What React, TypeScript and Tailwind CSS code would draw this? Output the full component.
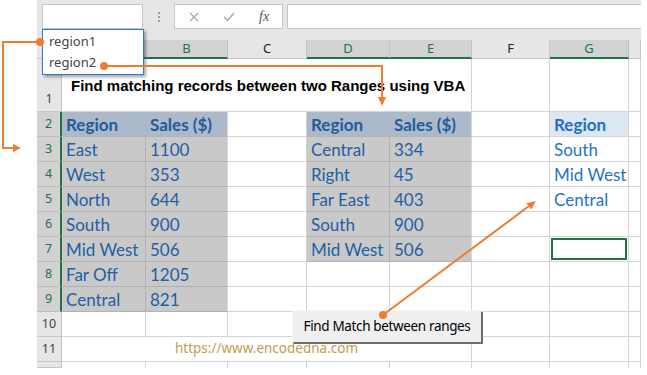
import React from 'react';

const colW = [84, 82, 79, 83, 82, 78, 79, 12];
const colL = ['A', 'B', 'C', 'D', 'E', 'F', 'G', ''];
const colSel = [true, true, false, true, true, false, true, false];

type Kind = 'n' | 'th' | 'thL' | 'td' | 'tdL' | 'gh' | 'gd' | 'sel' | 'title' | 'url' | 'last';
type Cell = { t?: string; k: Kind; span?: number };

const KIND: Record<Kind, string> = {
  n: 'border-r border-b border-[#d4d4d4]',
  last: 'border-r border-[#d4d4d4]',
  th: 'bg-[#acb9ca] border-r border-b border-r-[#acb9ca] border-b-[#b4b4b4] font-bold text-[#1f5c9a] pl-[4px]',
  thL: 'bg-[#acb9ca] border-r border-b border-r-[#dadada] border-b-[#b4b4b4] font-bold text-[#1f5c9a] pl-[4px]',
  td: 'bg-[#c9c9c9] border-r border-b border-[#b1b1b1] text-[#1f5fa3] pl-[4px]',
  tdL: 'bg-[#c9c9c9] border-r border-b border-r-[#dadada] border-b-[#b1b1b1] text-[#1f5fa3] pl-[4px]',
  gh: 'bg-[#dde7f1] border-r border-b border-[#d4d4d4] font-bold text-[#1f6fbf] pl-[4px]',
  gd: 'border-r border-b border-[#d4d4d4] text-[#2475c9] pl-[4px]',
  sel: 'border-r border-b border-[#d4d4d4] p-[1px]',
  title: 'border-r border-b border-r-[#d4d4d4] border-b-[#d4d4d4] pl-[9px]',
  url: 'border-r border-b border-[#d4d4d4] justify-center',
};

const t1 = [
  ['Region', 'Sales ($)'],
  ['East', '1100'],
  ['West', '353'],
  ['North', '644'],
  ['South', '900'],
  ['Mid West', '506'],
  ['Far Off', '1205'],
  ['Central', '821'],
];
const t2 = [
  ['Region', 'Sales ($)'],
  ['Central', '334'],
  ['Right', '45'],
  ['Far East', '403'],
  ['South', '900'],
  ['Mid West', '506'],
];
const gcol = ['Region', 'South', 'Mid West', 'Central'];

const rowH = [53, 25, 25, 25, 25, 25, 25, 25, 25, 25, 25, 6];

function buildRow(r: number): Cell[] {
  if (r === 1) {
    return [{ k: 'title', span: 5, t: 'Find matching records between two Ranges using VBA' }, { k: 'n' }, { k: 'n' }, { k: 'n' }];
  }
  if (r === 11) {
    return [{ k: 'url', span: 5, t: 'https://www.encodedna.com' }, { k: 'n' }, { k: 'n' }, { k: 'n' }];
  }
  if (r === 12) {
    return colW.map(() => ({ k: 'last' as Kind }));
  }
  const cells: Cell[] = [];
  const i1 = r - 2;
  if (i1 >= 0 && i1 < t1.length) {
    cells.push({ k: i1 === 0 ? 'th' : 'td', t: t1[i1][0] });
    cells.push({ k: i1 === 0 ? 'thL' : 'tdL', t: t1[i1][1] });
  } else {
    cells.push({ k: 'n' }, { k: 'n' });
  }
  cells.push({ k: 'n' });
  if (i1 >= 0 && i1 < t2.length) {
    cells.push({ k: i1 === 0 ? 'th' : 'td', t: t2[i1][0] });
    cells.push({ k: i1 === 0 ? 'thL' : 'tdL', t: t2[i1][1] });
  } else {
    cells.push({ k: 'n' }, { k: 'n' });
  }
  cells.push({ k: 'n' });
  if (i1 >= 0 && i1 < gcol.length) {
    cells.push({ k: i1 === 0 ? 'gh' : 'gd', t: gcol[i1] });
  } else if (r === 7) {
    cells.push({ k: 'sel' });
  } else {
    cells.push({ k: 'n' });
  }
  cells.push({ k: 'n' });
  return cells;
}

function SheetRow({ r }: { r: number }) {
  const cells = buildRow(r);
  const selected = r >= 2 && r <= 9;
  let ci = 0;
  return (
    <div className="flex" style={{ height: rowH[r - 1] }}>
      <div
        className={
          selected
            ? 'w-[25px] shrink-0 flex justify-center items-center bg-[#d2d2d2] border-b border-b-[#bdbdbd] border-r-2 border-r-[#217346] text-[#217346] text-[12.5px] font-["Noto_Sans",sans-serif]'
            : r === 1
            ? 'w-[25px] shrink-0 flex justify-center items-end pb-[2px] bg-[#e6e6e6] border-b border-r border-[#c6c6c6] text-[#444] text-[12.5px] font-["Noto_Sans",sans-serif]'
            : 'w-[25px] shrink-0 flex justify-center items-center bg-[#e6e6e6] border-b border-r border-[#c6c6c6] text-[#444] text-[12.5px] font-["Noto_Sans",sans-serif]'
        }
      >
        {r <= 11 ? r : ''}
      </div>
      {cells.map((c, idx) => {
        const span = c.span ?? 1;
        let w = 0;
        for (let s = 0; s < span; s++) w += colW[ci + s];
        ci += span;
        let content: React.ReactNode = null;
        if (c.k === 'title') {
          content = (
            <span className="font-['Liberation_Sans',sans-serif] font-bold text-[15px] text-black whitespace-nowrap">{c.t}</span>
          );
        } else if (c.k === 'url') {
          content = (
            <span className="font-['Noto_Sans',sans-serif] text-[13.5px] text-[#c59b50] whitespace-nowrap">{c.t}</span>
          );
        } else if (c.k === 'sel') {
          content = <div className="w-full h-full border-2 border-[#217346]"></div>;
        } else if (c.t) {
          content = <span className="whitespace-nowrap">{c.t}</span>;
        }
        return (
          <div
            key={idx}
            className={`shrink-0 flex items-center overflow-visible font-['Lato',sans-serif] text-[17px] leading-none ${KIND[c.k]}`}
            style={{ width: w }}
          >
            {content}
          </div>
        );
      })}
    </div>
  );
}

export default function App() {
  return (
    <div className="relative w-[647px] h-[375px] bg-white overflow-hidden">
      <div className="flex">
        <div className="w-[37px] shrink-0"></div>
        <div className="w-[604px] shrink-0 flex flex-col">
          {/* formula bar */}
          <div className="h-[40px] bg-[#e6e6e6] flex items-start pt-[4px] pl-[5px]">
            <div className="w-[101px] h-[25px] bg-white border border-[#c6c6c6]"></div>
            <div className="w-[31px] h-[25px] flex flex-col items-center justify-center gap-[2px]">
              <div className="w-[2px] h-[2px] bg-[#9a9a9a]"></div>
              <div className="w-[2px] h-[2px] bg-[#9a9a9a]"></div>
              <div className="w-[2px] h-[2px] bg-[#9a9a9a]"></div>
            </div>
            <div className="w-[109px] h-[25px] bg-white border border-[#c6c6c6] flex items-center">
              <div className="w-[36px] flex justify-center pl-[2px]">
                <svg width="10" height="10" viewBox="0 0 10 10">
                  <path d="M1 1 L9 9 M9 1 L1 9" stroke="#a6a6a6" strokeWidth="1.3" />
                </svg>
              </div>
              <div className="w-[36px] flex justify-center">
                <svg width="12" height="10" viewBox="0 0 12 10">
                  <path d="M1 5 L4.5 8.5 L11 1" stroke="#a6a6a6" strokeWidth="1.4" fill="none" />
                </svg>
              </div>
              <div className="w-[36px] flex justify-center">
                <span className="font-['Liberation_Serif',serif] italic text-[14px] text-[#555] leading-none">fx</span>
              </div>
            </div>
            <div className="ml-[4px] flex-1 h-[25px] bg-white border border-r-0 border-[#c6c6c6]"></div>
          </div>
          {/* column headers */}
          <div className="flex h-[19px]">
            <div className="w-[25px] shrink-0 bg-[#e6e6e6] border-r border-b border-[#c6c6c6]"></div>
            {colW.map((w, i) => (
              <div
                key={i}
                className={
                  colSel[i]
                    ? "shrink-0 flex justify-center items-center bg-[#d2d2d2] border-r border-r-[#c0c0c0] border-b-2 border-b-[#217346] text-[#217346] text-[13px] font-['Noto_Sans',sans-serif]"
                    : "shrink-0 flex justify-center items-center bg-[#e6e6e6] border-r border-b border-[#c6c6c6] text-[#222] text-[13px] font-['Noto_Sans',sans-serif]"
                }
                style={{ width: w }}
              >
                {colL[i]}
              </div>
            ))}
          </div>
          {rowH.map((_, i) => (
            <SheetRow key={i} r={i + 1} />
          ))}
        </div>
      </div>

      {/* name box dropdown */}
      <div className="absolute left-[42px] top-[29px] w-[102px] h-[46px] bg-white border border-[#2b7bd4] shadow-[2px_2px_3px_rgba(0,0,0,0.35)] pt-[1px] font-['Noto_Sans',sans-serif] text-[13px] text-[#444]">
        <div className="h-[21px] pl-[6px] flex items-center">region1</div>
        <div className="h-[21px] pl-[6px] flex items-center">region2</div>
      </div>

      {/* button */}
      <div className="absolute left-[292px] top-[310px] w-[189px] h-[32px] bg-[#efefef] border-t border-l border-[#f8f8f8] shadow-[2px_2px_0_#6b6b6b] flex items-center justify-center font-['Noto_Sans',sans-serif] text-[13.5px] tracking-[-0.35px] text-black">
        Find Match between ranges
      </div>

      {/* annotations */}
      <svg className="absolute left-0 top-0 pointer-events-none" width="647" height="375" viewBox="0 0 647 375">
        <path d="M40 42 H3 V148 H14" stroke="#ed7d31" strokeWidth="2" fill="none" />
        <polygon points="21,148 13,144 13,152" fill="#ed7d31" />
        <circle cx="40" cy="42" r="4" fill="#ed7d31" />
        <path d="M104 66 H382 V98" stroke="#ed7d31" strokeWidth="2" fill="none" />
        <polygon points="382,106 378,97 386,97" fill="#ed7d31" />
        <circle cx="104" cy="66" r="4" fill="#ed7d31" />
        <line x1="383" y1="315" x2="529" y2="206" stroke="#ed7d31" strokeWidth="2" />
        <polygon points="536,201 531.2,209.6 526.4,203.2" fill="#ed7d31" />
        <circle cx="383" cy="315" r="4" fill="#ed7d31" />
      </svg>
    </div>
  );
}
